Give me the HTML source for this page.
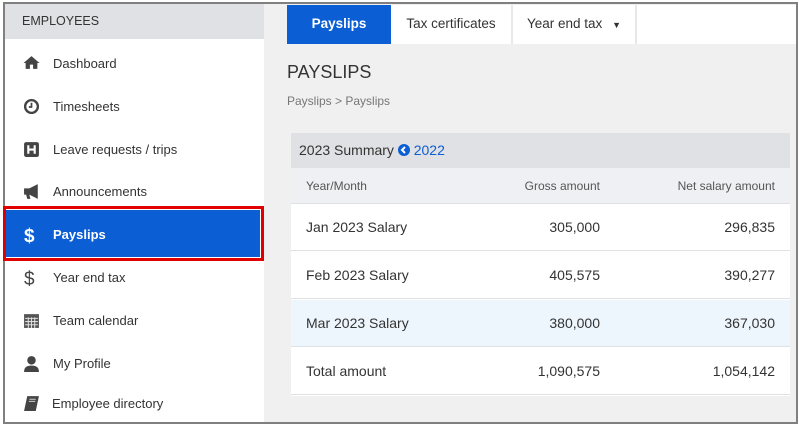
<!DOCTYPE html>
<html><head><style>
*{margin:0;padding:0;box-sizing:border-box}
body{width:799px;height:426px;background:#fff;font-family:"Liberation Sans",sans-serif;position:relative;overflow:hidden;color:#333}
.frame{position:absolute;left:3px;top:2px;width:795px;height:422px;border:2px solid #808080;background:#f0f0f0}
.side{position:absolute;left:5px;top:4px;width:259px;height:418px;background:#fff}
.sh{position:absolute;left:0;top:0;width:259px;height:35px;background:#e0e1e4;font-size:12.5px;color:#333;padding:10px 0 0 17px}
.it{position:absolute;left:0;width:259px;height:30px;font-size:13px;color:#333}
.it span{position:absolute;left:48px;top:6px}
.it svg{position:absolute;left:18px;top:5px}
.sel{position:absolute;left:3px;top:206px;width:261px;height:55px;border:3px solid #e00000}
.sel div{position:absolute;left:0;top:0;right:0;bottom:0;background:#0b5ed3;border:1px solid #fff;border-left:0}
.abs{position:absolute}
.tabs{position:absolute;left:287px;top:5px;width:509px;height:39px;background:#fff}
.tab{position:absolute;top:0;height:39px;font-size:13.5px;padding-top:11px;text-align:center;border-right:2px solid #e8e8e8}
.panel{position:absolute;left:291px;top:133px;width:499px;height:263px;background:#fff}
.row{position:absolute;left:0;width:499px;height:47px;border-bottom:1px solid #dfe1e4;font-size:14px}
.row span{position:absolute;top:15px}
.c1{left:15px}.c2{right:190px}.c3{right:15px}
</style></head><body>
<div class="frame"></div>
<div class="side">
<div class="sh">EMPLOYEES</div>
</div>
<div class="it" style="top:50px;left:5px"><svg width="17" height="15" viewBox="0 0 16 14"><path d="M8 1L0.5 7.5h2V13h4V9h3v4h4V7.5h2z" fill="#444"/></svg><span>Dashboard</span></div>
<div class="it" style="top:93px;left:5px"><svg width="17" height="17" viewBox="0 0 16 16"><circle cx="8" cy="8" r="6" fill="none" stroke="#444" stroke-width="2.2"/><path d="M8 4.5V8.5H5.5" fill="none" stroke="#444" stroke-width="1.6"/></svg><span>Timesheets</span></div>
<div class="it" style="top:136px;left:5px"><svg width="17" height="17" viewBox="0 0 16 16"><rect x="1" y="1" width="14" height="14" rx="2" fill="#444"/><path d="M5 4v8M11 4v8M5 8h6" stroke="#fff" stroke-width="2"/></svg><span>Leave requests / trips</span></div>
<div class="it" style="top:178px;left:5px"><svg width="19" height="17" viewBox="0 0 18 16"><path d="M1 5h5l8-4v14l-8-4H1zM3 11l1 4h3l-1-4z" fill="#444"/></svg><span>Announcements</span></div>
<div class="sel"><div></div></div>
<div class="it" style="top:221px;left:5px;color:#fff"><svg width="14" height="20" viewBox="0 0 14 20"><text x="1" y="16" font-size="19" font-weight="bold" fill="#fff" font-family="Liberation Sans">$</text></svg><span style="font-weight:bold">Payslips</span></div>
<div class="it" style="top:264px;left:5px"><svg width="14" height="20" viewBox="0 0 14 20"><text x="1" y="16" font-size="19" fill="#444" font-family="Liberation Sans">$</text></svg><span>Year end tax</span></div>
<div class="it" style="top:307px;left:5px"><svg width="17" height="17" viewBox="0 0 16 16"><rect x="1" y="2" width="14" height="13" fill="#555"/><path d="M2 6h12M2 9h12M2 12h12M5 5v10M8 5v10M11 5v10" stroke="#ddd" stroke-width="1"/></svg><span>Team calendar</span></div>
<div class="it" style="top:350px;left:5px"><svg width="17" height="17" viewBox="0 0 16 16"><circle cx="8" cy="5" r="4" fill="#444"/><path d="M1 16c0-5 3-6 7-6s7 1 7 6z" fill="#444"/></svg><span>My Profile</span></div>
<div class="it" style="top:390px;left:5px"><svg width="17" height="17" viewBox="0 0 16 16"><path d="M4 1h11l-3 14H1z" fill="#444"/><path d="M6 4h6M5.5 6h6" stroke="#ccc"/></svg><span style="left:47px">Employee directory</span></div>

<div class="tabs">
<div class="tab" style="left:0;width:104px;background:#0b5ed3;color:#fff;font-weight:bold;border:0">Payslips</div>
<div class="tab" style="left:104px;width:122px">Tax certificates</div>
<div class="tab" style="left:226px;width:124px">Year end tax <span style="font-size:9px;margin-left:6px">▼</span></div>
</div>
<div class="abs" style="left:287px;top:62px;font-size:18px;color:#333">PAYSLIPS</div>
<div class="abs" style="left:287px;top:94px;font-size:12px;color:#777">Payslips &gt; Payslips</div>
<div class="panel">
<div class="abs" style="left:0;top:0;width:499px;height:35px;background:#e0e1e4;font-size:14px;padding:9px 0 0 8px">2023 Summary <span style="color:#0b5ed3"><svg width="12" height="12" viewBox="0 0 12 12" style="vertical-align:-1px"><circle cx="6" cy="6" r="6" fill="#0b5ed3"/><path d="M7 3L4 6l3 3" stroke="#fff" stroke-width="2" fill="none"/></svg> 2022</span></div>
<div class="abs" style="left:0;top:35px;width:499px;height:36px;background:#eef0f3;border-bottom:1px solid #dfe1e4;font-size:12px;color:#555"><span class="abs" style="left:15px;top:11px">Year/Month</span><span class="abs" style="right:190px;top:11px">Gross amount</span><span class="abs" style="right:15px;top:11px">Net salary amount</span></div>
<div class="row" style="top:71px"><span class="c1">Jan 2023 Salary</span><span class="c2">305,000</span><span class="c3">296,835</span></div>
<div class="row" style="top:119px"><span class="c1">Feb 2023 Salary</span><span class="c2">405,575</span><span class="c3">390,277</span></div>
<div class="row" style="top:167px;background:#eef6fd"><span class="c1">Mar 2023 Salary</span><span class="c2">380,000</span><span class="c3">367,030</span></div>
<div class="row" style="top:215px"><span class="c1">Total amount</span><span class="c2">1,090,575</span><span class="c3">1,054,142</span></div>
</div>
</body></html>
